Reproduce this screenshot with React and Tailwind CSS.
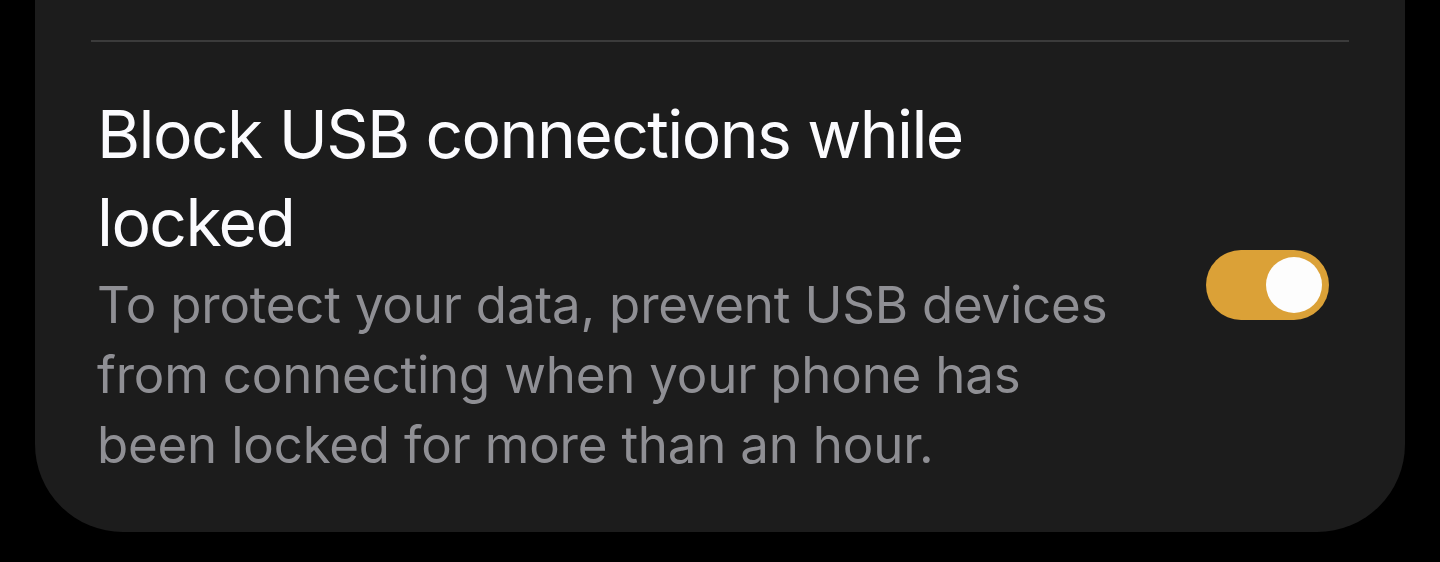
export default function App() {
  return (
    <div className="h-[562px] w-full overflow-hidden bg-black" style={{ fontFamily: 'Inter, "Noto Sans", sans-serif' }}>
      <div className="mx-[35px] rounded-b-[88px] bg-[#1c1c1c] pt-10 pb-[52px]">
        {/* divider */}
        <div className="mx-14 h-[2px] bg-[#3b3b3b]" />

        <div className="mt-12 flex items-center pl-[62px] pr-[76px]">
          <div className="w-[1050px]">
            <h1 className="text-[66px] leading-[88px] font-normal tracking-[-1.6px] text-[#fbfbfe]">
              Block USB connections while locked
            </h1>
            <p className="mt-1 text-[51px] leading-[70px] tracking-[-0.2px] text-[#8f8f94]">
              To protect your data, prevent USB devices from connecting when your phone has been locked for more than an hour.
            </p>
          </div>
          <div className="ml-auto flex h-[70px] w-[123px] items-center justify-end rounded-full bg-[#dba137] pr-[7px]">
            <div className="h-[56px] w-[56px] rounded-full bg-[#fdfdfd]" />
          </div>
        </div>
      </div>
    </div>
  );
}
